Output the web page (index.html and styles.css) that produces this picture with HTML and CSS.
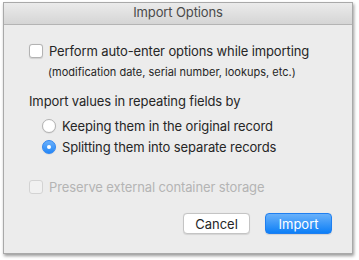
FILE: index.html
```html
<!DOCTYPE html>
<html lang="en">
<head>
    <meta charset="UTF-8">
    <title>Import Options</title>
    <link rel="stylesheet" href="styles.css">
</head>
<body>
    <div class="page">
        <div class="window">
            <div class="titlebar">Import Options</div>
            <div class="content">
                <label class="option">
                    <span class="check"></span>
                    <span>Perform auto-enter options while importing</span>
                </label>
                <div class="hint">(modification date, serial number, lookups, etc.)</div>

                <div class="group-label">Import values in repeating fields by</div>
                <label class="option radio-row first">
                    <span class="radio"></span>
                    <span>Keeping them in the original record</span>
                </label>
                <label class="option radio-row">
                    <span class="radio on"></span>
                    <span>Splitting them into separate records</span>
                </label>

                <label class="option disabled">
                    <span class="check"></span>
                    <span>Preserve external container storage</span>
                </label>

                <div class="buttons">
                    <button type="button" class="btn">Cancel</button>
                    <button type="button" class="btn primary">Import</button>
                </div>
            </div>
        </div>
    </div>
</body>
</html>
```

FILE: styles.css
```css
/* dialog */
body {
    margin: 0;
    background: #ffffff;
    font-family: Inter, "Liberation Sans", sans-serif;
    font-size: 13px;
    letter-spacing: -0.12px;
    color: #262626;
}
.page {
    padding: 2px 6px 6px 3px;
}
.window {
    width: 348px;
    height: 250px;
    border: 1px solid #a9a9a9;
    background: #ececec;
    box-shadow: 1px 2px 3px rgba(0, 0, 0, 0.4);
}
.titlebar {
    height: 21px;
    line-height: 19px;
    text-align: center;
    color: #4a4a4a;
    background: linear-gradient(#ebebeb, #d5d5d5);
    border-bottom: 1px solid #b4b4b4;
}
.content {
    padding: 18px 20px 0 25px;
    display: flex;
    flex-direction: column;
}
.option {
    display: flex;
    align-items: center;
    gap: 6px;
    line-height: 16px;
    height: 16px;
}
.check {
    width: 12px;
    height: 12px;
    border: 1px solid #b3b3b3;
    border-radius: 3px;
    background: #ffffff;
    box-shadow: 0 0.5px 1px rgba(0, 0, 0, 0.12);
}
.hint {
    margin: 6px 0 0 19px;
    font-size: 11px;
    letter-spacing: 0;
    line-height: 14px;
}
.group-label {
    margin-top: 14px;
    line-height: 16px;
}
.radio-row {
    margin: 5px 0 0 13px;
}
.radio-row.first {
    margin-top: 9px;
}
.radio {
    width: 12px;
    height: 12px;
    border: 1px solid #b3b3b3;
    border-radius: 50%;
    background: #ffffff;
    box-shadow: 0 0.5px 1px rgba(0, 0, 0, 0.12);
    position: relative;
}
.radio.on {
    border-color: #2f86f2;
    background: linear-gradient(#6ab0fb, #2487f7);
}
.radio.on::after {
    content: "";
    position: absolute;
    left: 4px;
    top: 4px;
    width: 4px;
    height: 4px;
    border-radius: 50%;
    background: #ffffff;
}
.disabled {
    margin-top: 24px;
    color: #b4b4b4;
}
.disabled .check {
    border-color: #d3d3d3;
    background: #f1f1f1;
    box-shadow: none;
}
.buttons {
    margin-top: 18px;
    display: flex;
    justify-content: flex-end;
    gap: 15px;
}
.btn {
    width: 67px;
    height: 21px;
    padding: 0;
    border: 1px solid #c4c4c4;
    border-radius: 4px;
    background: #ffffff;
    font-family: inherit;
    font-size: 13px;
    letter-spacing: 0;
    color: #262626;
    box-shadow: 0 0.5px 1px rgba(0, 0, 0, 0.1);
}
.btn.primary {
    border-color: #1f7ff0;
    background: linear-gradient(#69b1fa, #0d7ff7);
    color: #ffffff;
}
```
